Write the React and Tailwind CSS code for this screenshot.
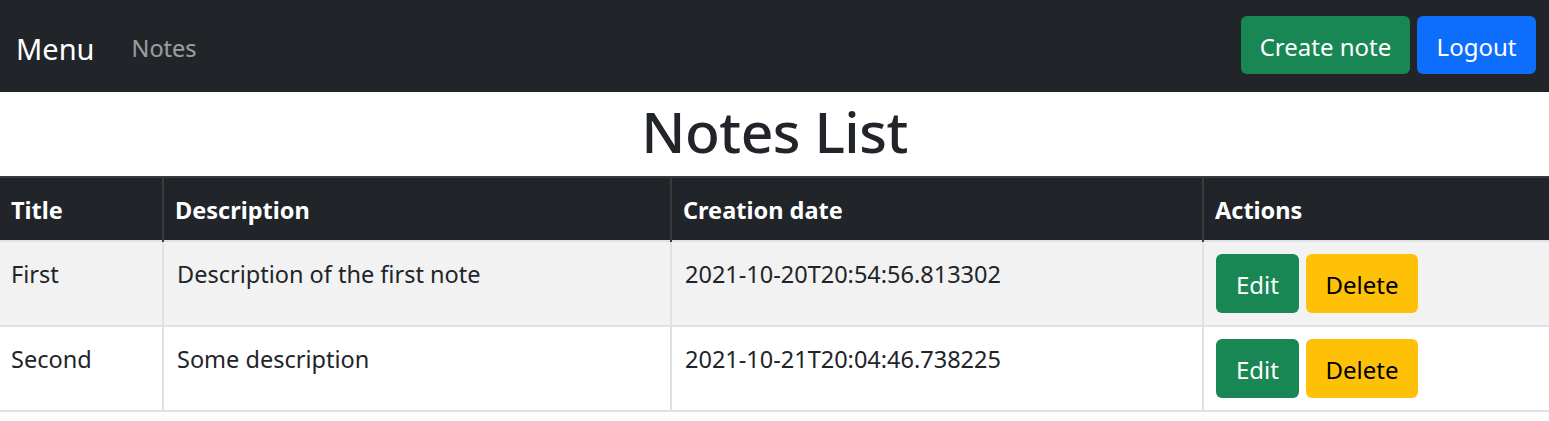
import React from 'react';

const notes = [
  { id: 1, title: 'First', description: 'Description of the first note', created: '2021-10-20T20:54:56.813302' },
  { id: 2, title: 'Second', description: 'Some description', created: '2021-10-21T20:04:46.738225' },
];

const font = { fontFamily: '"Noto Sans", "Open Sans", sans-serif' };

export default function App() {
  return (
    <div className="min-h-screen bg-white text-[#212529]" style={font}>
      <nav className="h-[92px] bg-[#212529] flex items-center justify-between pl-4 pr-[13px]">
        <div className="flex items-center pt-[5px]">
          <span className="text-[29px] leading-none text-white">Menu</span>
          <a className="ml-[37px] text-[23.5px] text-white/55">Notes</a>
        </div>
        <div className="flex items-center gap-[7px] -mt-[2px]">
          <button className="h-[58px] w-[169px] pt-[3px] rounded-[6px] bg-[#198754] text-white text-[24px]">Create note</button>
          <button className="h-[58px] w-[119px] pt-[3px] rounded-[6px] bg-[#0d6efd] text-white text-[24px]">Logout</button>
        </div>
      </nav>

      <h1 className="text-center text-[57px] tracking-[-0.5px] leading-[72px] font-medium pt-[3px] pb-[9px]">Notes List</h1>

      <table className="w-full table-fixed border-collapse text-[23.5px]">
        <colgroup>
          <col className="w-[163px]" />
          <col className="w-[508px]" />
          <col className="w-[532px]" />
          <col />
        </colgroup>
        <thead>
          <tr className="bg-[#212529] text-white border-t-2 border-[#373b3e]">
            {['Title', 'Description', 'Creation date', 'Actions'].map((h) => (
              <th key={h} className="text-left font-bold h-[64px] pt-[3px] px-[11px] border-x-2 border-[#373b3e] first:border-l-0 last:border-r-0">
                {h}
              </th>
            ))}
          </tr>
        </thead>
        <tbody>
          {notes.map((n, i) => (
            <tr key={n.id} className={i % 2 === 0 ? 'bg-[#f2f2f2]' : 'bg-white'}>
              <td className="align-top border-2 border-[#dee2e6] border-l-0 px-[11px] pt-[15px]">{n.title}</td>
              <td className="align-top border-2 border-[#dee2e6] px-[13px] pt-[15px]">{n.description}</td>
              <td className="align-top border-2 border-[#dee2e6] px-[13px] pt-[15px]">{n.created}</td>
              <td className="align-top border-2 border-[#dee2e6] border-r-0 px-[12px] py-[12px]">
                <div className="flex gap-[7px]">
                  <button className="h-[59px] w-[83px] pt-[2px] rounded-[6px] bg-[#198754] text-white text-[24px]">Edit</button>
                  <button className="h-[59px] w-[112px] pt-[2px] rounded-[6px] bg-[#ffc107] text-black text-[24px]">Delete</button>
                </div>
              </td>
            </tr>
          ))}
        </tbody>
      </table>
    </div>
  );
}
